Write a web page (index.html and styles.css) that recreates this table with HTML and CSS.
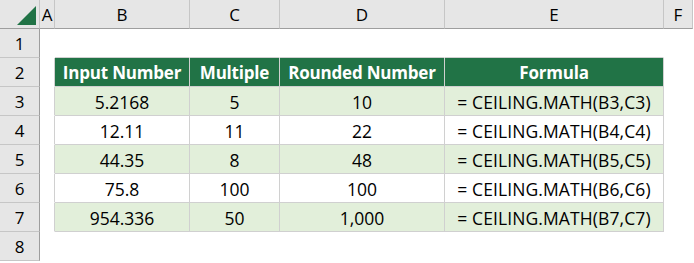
FILE: index.html
```html
<!DOCTYPE html>
<html>
<head>
<meta charset="utf-8">
<link rel="stylesheet" href="styles.css">
</head>
<body>
<div class="sheet">
  <div class="corner"><span class="tri"></span></div>
  <div class="ch">A</div>
  <div class="ch">B</div>
  <div class="ch">C</div>
  <div class="ch">D</div>
  <div class="ch">E</div>
  <div class="ch">F</div>

  <div class="rh">1</div>
  <div class="c"></div><div class="c tt"></div><div class="c tt"></div><div class="c tt"></div><div class="c tt"></div><div class="c"></div>

  <div class="rh">2</div>
  <div class="c tl"></div>
  <div class="c hd">Input Number</div>
  <div class="c hd">Multiple</div>
  <div class="c hd">Rounded Number</div>
  <div class="c hd">Formula</div>
  <div class="c"></div>

  <div class="rh">3</div>
  <div class="c tl"></div>
  <div class="c td alt">5.2168</div>
  <div class="c td alt">5</div>
  <div class="c td alt">10</div>
  <div class="c td alt fm">= CEILING.MATH(B3,C3)</div>
  <div class="c"></div>

  <div class="rh">4</div>
  <div class="c tl"></div>
  <div class="c td">12.11</div>
  <div class="c td">11</div>
  <div class="c td">22</div>
  <div class="c td fm">= CEILING.MATH(B4,C4)</div>
  <div class="c"></div>

  <div class="rh">5</div>
  <div class="c tl"></div>
  <div class="c td alt">44.35</div>
  <div class="c td alt">8</div>
  <div class="c td alt">48</div>
  <div class="c td alt fm">= CEILING.MATH(B5,C5)</div>
  <div class="c"></div>

  <div class="rh">6</div>
  <div class="c tl"></div>
  <div class="c td">75.8</div>
  <div class="c td">100</div>
  <div class="c td">100</div>
  <div class="c td fm">= CEILING.MATH(B6,C6)</div>
  <div class="c"></div>

  <div class="rh">7</div>
  <div class="c tl"></div>
  <div class="c td alt">954.336</div>
  <div class="c td alt">50</div>
  <div class="c td alt">1,000</div>
  <div class="c td alt fm">= CEILING.MATH(B7,C7)</div>
  <div class="c"></div>

  <div class="rh">8</div>
  <div class="c"></div><div class="c"></div><div class="c"></div><div class="c"></div><div class="c"></div><div class="c"></div>
</div>
</body>
</html>
```
FILE: styles.css
```css
html, body {
  margin: 0;
  padding: 0;
  background: #ffffff;
}
body {
  font-family: "Open Sans", "Liberation Sans", sans-serif;
  font-size: 17px;
  color: #000000;
}
.sheet {
  display: grid;
  grid-template-columns: 40px 15px 135px 90px 165px 219px 29px;
  grid-auto-rows: 29px;
  width: 693px;
}
.corner, .ch, .rh, .c {
  box-sizing: border-box;
  display: flex;
  align-items: center;
  justify-content: center;
  overflow: hidden;
  white-space: nowrap;
}
.corner {
  background: #e6e6e6;
  border-right: 1px solid #c6c6c6;
  border-bottom: 1px solid #9e9e9e;
  position: relative;
}
.tri {
  position: absolute;
  right: 3px;
  bottom: 3px;
  width: 0;
  height: 0;
  border-left: 19px solid transparent;
  border-bottom: 19px solid #217346;
}
.ch {
  background: #e6e6e6;
  border-right: 1px solid #c6c6c6;
  border-bottom: 1px solid #9e9e9e;
  font-size: 17px;
  padding-top: 1px;
}
.rh {
  background: #e6e6e6;
  border-right: 1px solid #9e9e9e;
  border-bottom: 1px solid #c6c6c6;
  font-size: 17px;
  padding-top: 1px;
}
.c {
  border-right: 1px solid #ffffff;
  border-bottom: 1px solid #ffffff;
}
.c.tt {
  border-bottom-color: #d0d0d0;
}
.c.tl {
  border-right-color: #d0d0d0;
}
.c.hd {
  background: #217346;
  color: #ffffff;
  font-weight: 700;
  border-right-color: #d0d0d0;
  border-bottom-color: #d0d0d0;
  font-size: 17px;
  letter-spacing: -0.2px;
}
.c.td {
  border-right-color: #d0d0d0;
  border-bottom-color: #d0d0d0;
  font-size: 17.5px;
  padding-top: 2px;
}
.c.fm {
  letter-spacing: 0.1px;
}
.c.alt {
  background: #e2efda;
}
```
